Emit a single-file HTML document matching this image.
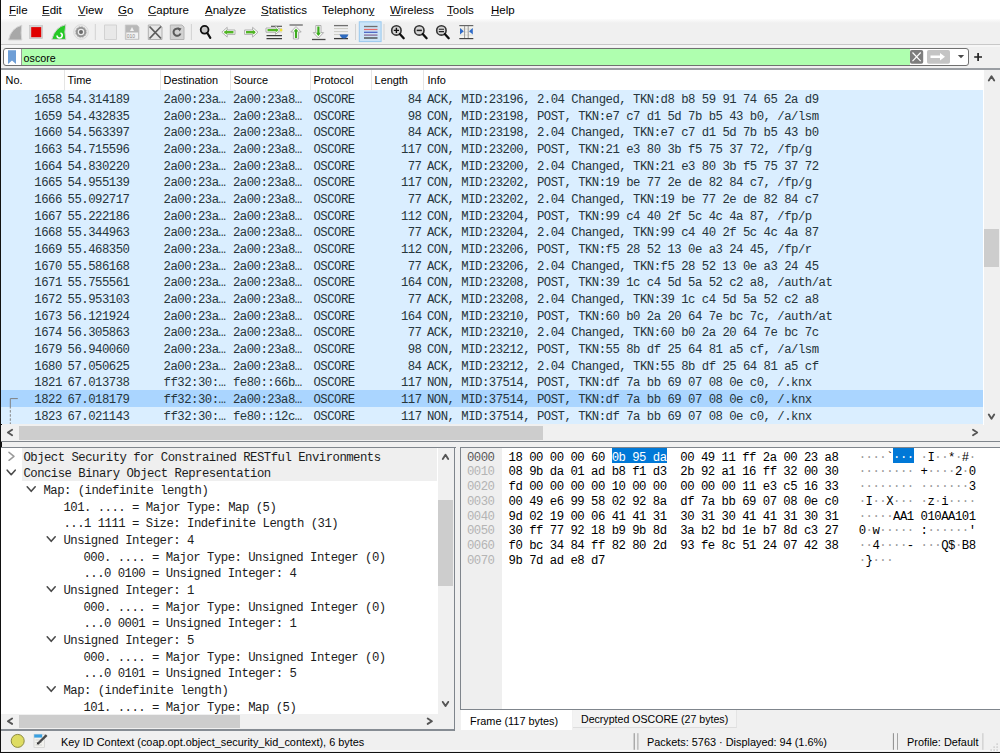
<!DOCTYPE html>
<html><head><meta charset="utf-8"><style>
*{margin:0;padding:0;box-sizing:border-box}
html,body{width:1000px;height:753px;overflow:hidden;background:#f0f0f0;position:relative}
body{font-family:"Liberation Sans",sans-serif;color:#000}
.a{position:absolute}
.m{font-family:"Liberation Mono",monospace;font-size:12.3px;letter-spacing:-0.510px;white-space:pre;line-height:16.6667px;color:#26353b}
.ui{font-family:"Liberation Sans",sans-serif;font-size:11px;white-space:pre;line-height:13px}
.menu span{position:absolute;top:3.8px;font-size:11.5px;color:#000;line-height:13px}
.menu u{text-decoration:underline;text-underline-offset:0.6px;text-decoration-thickness:1.2px;text-decoration-color:#505050}
svg{position:absolute;left:0;top:0;overflow:visible}
</style></head>
<body>
<div class="a" style="left:0;top:0;width:1.5px;height:753px;background:#111"></div>
<div class="a menu" style="left:1px;top:0;width:999px;height:19px;background:#fff">
<span style="left:8px"><u>F</u>ile</span>
<span style="left:41px"><u>E</u>dit</span>
<span style="left:77px"><u>V</u>iew</span>
<span style="left:117px"><u>G</u>o</span>
<span style="left:147px"><u>C</u>apture</span>
<span style="left:204px"><u>A</u>nalyze</span>
<span style="left:260px"><u>S</u>tatistics</span>
<span style="left:321px">Telephon<u>y</u></span>
<span style="left:389px"><u>W</u>ireless</span>
<span style="left:446px"><u>T</u>ools</span>
<span style="left:490px"><u>H</u>elp</span>
</div>
<div class="a" style="left:1px;top:19px;width:999px;height:25px;background:linear-gradient(#fcfcfc,#f0f0f0 4px)"></div>
<div class="a" style="left:1px;top:43.8px;width:999px;height:1px;background:#c8c8c8"></div>
<div class="a" style="left:1px;top:44.8px;width:999px;height:2.4px;background:#f6f6f6"></div>
<div class="a" style="left:1px;top:47.2px;width:999px;height:20.8px;background:#f0f0f0"></div>
<div class="a" style="left:3px;top:48px;width:966px;height:17.6px;border:1px solid #707070;border-radius:3px;background:#fff;overflow:hidden"><div class="a" style="left:17.5px;top:0;width:888.5px;height:16px;background:#afffaf"></div><div class="a" style="left:17.1px;top:0;width:0.9px;height:16px;background:#9a9a9a"></div><div class="a ui" style="left:19.6px;top:3.2px;font-size:10.7px;line-height:13px;color:#000">oscore</div></div>
<div class="a" style="left:1px;top:68px;width:999px;height:1.6px;background:#9a9ea3"></div>
<div class="a" style="left:1px;top:69.6px;width:983px;height:20.6px;background:#fff"></div>
<div class="a" style="left:63.9px;top:69.6px;width:1px;height:20.6px;background:#e5e5e5"></div>
<div class="a" style="left:159.9px;top:69.6px;width:1px;height:20.6px;background:#e5e5e5"></div>
<div class="a" style="left:229.5px;top:69.6px;width:1px;height:20.6px;background:#e5e5e5"></div>
<div class="a" style="left:310px;top:69.6px;width:1px;height:20.6px;background:#e5e5e5"></div>
<div class="a" style="left:370.7px;top:69.6px;width:1px;height:20.6px;background:#e5e5e5"></div>
<div class="a" style="left:423.2px;top:69.6px;width:1px;height:20.6px;background:#e5e5e5"></div>
<div class="a ui" style="left:5.6px;top:74.3px;font-size:10.9px;color:#000">No.</div>
<div class="a ui" style="left:67.6px;top:74.3px;font-size:10.9px;color:#000">Time</div>
<div class="a ui" style="left:163.6px;top:74.3px;font-size:10.9px;color:#000">Destination</div>
<div class="a ui" style="left:233.6px;top:74.3px;font-size:10.9px;color:#000">Source</div>
<div class="a ui" style="left:313.6px;top:74.3px;font-size:10.9px;color:#000">Protocol</div>
<div class="a ui" style="left:374.6px;top:74.3px;font-size:10.9px;color:#000">Length</div>
<div class="a ui" style="left:427.6px;top:74.3px;font-size:10.9px;color:#000">Info</div>
<div class="a" style="left:1px;top:90.2px;width:982px;height:333.33399999999995px;background:#daeeff"></div>
<div class="a" style="left:1px;top:390.20059999999995px;width:982px;height:16.6667px;background:#aad5ff"></div>
<div class="a m" style="left:0;top:92.00px;width:983px;height:16.6667px"><span class="a" style="right:921.2px;top:0">1658</span><span class="a" style="left:67.6px;top:0">54.314189</span><span class="a" style="left:163.6px;top:0">2a00:23a…</span><span class="a" style="left:233px;top:0">2a00:23a8…</span><span class="a" style="left:313.5px;top:0">OSCORE</span><span class="a" style="right:561.5px;top:0">84</span><span class="a" style="left:427px;top:0">ACK, MID:23196, 2.04 Changed, TKN:d8 b8 59 91 74 65 2a d9</span></div>
<div class="a m" style="left:0;top:108.67px;width:983px;height:16.6667px"><span class="a" style="right:921.2px;top:0">1659</span><span class="a" style="left:67.6px;top:0">54.432835</span><span class="a" style="left:163.6px;top:0">2a00:23a…</span><span class="a" style="left:233px;top:0">2a00:23a8…</span><span class="a" style="left:313.5px;top:0">OSCORE</span><span class="a" style="right:561.5px;top:0">98</span><span class="a" style="left:427px;top:0">CON, MID:23198, POST, TKN:e7 c7 d1 5d 7b b5 43 b0, /a/lsm</span></div>
<div class="a m" style="left:0;top:125.33px;width:983px;height:16.6667px"><span class="a" style="right:921.2px;top:0">1660</span><span class="a" style="left:67.6px;top:0">54.563397</span><span class="a" style="left:163.6px;top:0">2a00:23a…</span><span class="a" style="left:233px;top:0">2a00:23a8…</span><span class="a" style="left:313.5px;top:0">OSCORE</span><span class="a" style="right:561.5px;top:0">84</span><span class="a" style="left:427px;top:0">ACK, MID:23198, 2.04 Changed, TKN:e7 c7 d1 5d 7b b5 43 b0</span></div>
<div class="a m" style="left:0;top:142.00px;width:983px;height:16.6667px"><span class="a" style="right:921.2px;top:0">1663</span><span class="a" style="left:67.6px;top:0">54.715596</span><span class="a" style="left:163.6px;top:0">2a00:23a…</span><span class="a" style="left:233px;top:0">2a00:23a8…</span><span class="a" style="left:313.5px;top:0">OSCORE</span><span class="a" style="right:561.5px;top:0">117</span><span class="a" style="left:427px;top:0">CON, MID:23200, POST, TKN:21 e3 80 3b f5 75 37 72, /fp/g</span></div>
<div class="a m" style="left:0;top:158.67px;width:983px;height:16.6667px"><span class="a" style="right:921.2px;top:0">1664</span><span class="a" style="left:67.6px;top:0">54.830220</span><span class="a" style="left:163.6px;top:0">2a00:23a…</span><span class="a" style="left:233px;top:0">2a00:23a8…</span><span class="a" style="left:313.5px;top:0">OSCORE</span><span class="a" style="right:561.5px;top:0">77</span><span class="a" style="left:427px;top:0">ACK, MID:23200, 2.04 Changed, TKN:21 e3 80 3b f5 75 37 72</span></div>
<div class="a m" style="left:0;top:175.33px;width:983px;height:16.6667px"><span class="a" style="right:921.2px;top:0">1665</span><span class="a" style="left:67.6px;top:0">54.955139</span><span class="a" style="left:163.6px;top:0">2a00:23a…</span><span class="a" style="left:233px;top:0">2a00:23a8…</span><span class="a" style="left:313.5px;top:0">OSCORE</span><span class="a" style="right:561.5px;top:0">117</span><span class="a" style="left:427px;top:0">CON, MID:23202, POST, TKN:19 be 77 2e de 82 84 c7, /fp/g</span></div>
<div class="a m" style="left:0;top:192.00px;width:983px;height:16.6667px"><span class="a" style="right:921.2px;top:0">1666</span><span class="a" style="left:67.6px;top:0">55.092717</span><span class="a" style="left:163.6px;top:0">2a00:23a…</span><span class="a" style="left:233px;top:0">2a00:23a8…</span><span class="a" style="left:313.5px;top:0">OSCORE</span><span class="a" style="right:561.5px;top:0">77</span><span class="a" style="left:427px;top:0">ACK, MID:23202, 2.04 Changed, TKN:19 be 77 2e de 82 84 c7</span></div>
<div class="a m" style="left:0;top:208.67px;width:983px;height:16.6667px"><span class="a" style="right:921.2px;top:0">1667</span><span class="a" style="left:67.6px;top:0">55.222186</span><span class="a" style="left:163.6px;top:0">2a00:23a…</span><span class="a" style="left:233px;top:0">2a00:23a8…</span><span class="a" style="left:313.5px;top:0">OSCORE</span><span class="a" style="right:561.5px;top:0">112</span><span class="a" style="left:427px;top:0">CON, MID:23204, POST, TKN:99 c4 40 2f 5c 4c 4a 87, /fp/p</span></div>
<div class="a m" style="left:0;top:225.33px;width:983px;height:16.6667px"><span class="a" style="right:921.2px;top:0">1668</span><span class="a" style="left:67.6px;top:0">55.344963</span><span class="a" style="left:163.6px;top:0">2a00:23a…</span><span class="a" style="left:233px;top:0">2a00:23a8…</span><span class="a" style="left:313.5px;top:0">OSCORE</span><span class="a" style="right:561.5px;top:0">77</span><span class="a" style="left:427px;top:0">ACK, MID:23204, 2.04 Changed, TKN:99 c4 40 2f 5c 4c 4a 87</span></div>
<div class="a m" style="left:0;top:242.00px;width:983px;height:16.6667px"><span class="a" style="right:921.2px;top:0">1669</span><span class="a" style="left:67.6px;top:0">55.468350</span><span class="a" style="left:163.6px;top:0">2a00:23a…</span><span class="a" style="left:233px;top:0">2a00:23a8…</span><span class="a" style="left:313.5px;top:0">OSCORE</span><span class="a" style="right:561.5px;top:0">112</span><span class="a" style="left:427px;top:0">CON, MID:23206, POST, TKN:f5 28 52 13 0e a3 24 45, /fp/r</span></div>
<div class="a m" style="left:0;top:258.67px;width:983px;height:16.6667px"><span class="a" style="right:921.2px;top:0">1670</span><span class="a" style="left:67.6px;top:0">55.586168</span><span class="a" style="left:163.6px;top:0">2a00:23a…</span><span class="a" style="left:233px;top:0">2a00:23a8…</span><span class="a" style="left:313.5px;top:0">OSCORE</span><span class="a" style="right:561.5px;top:0">77</span><span class="a" style="left:427px;top:0">ACK, MID:23206, 2.04 Changed, TKN:f5 28 52 13 0e a3 24 45</span></div>
<div class="a m" style="left:0;top:275.33px;width:983px;height:16.6667px"><span class="a" style="right:921.2px;top:0">1671</span><span class="a" style="left:67.6px;top:0">55.755561</span><span class="a" style="left:163.6px;top:0">2a00:23a…</span><span class="a" style="left:233px;top:0">2a00:23a8…</span><span class="a" style="left:313.5px;top:0">OSCORE</span><span class="a" style="right:561.5px;top:0">164</span><span class="a" style="left:427px;top:0">CON, MID:23208, POST, TKN:39 1c c4 5d 5a 52 c2 a8, /auth/at</span></div>
<div class="a m" style="left:0;top:292.00px;width:983px;height:16.6667px"><span class="a" style="right:921.2px;top:0">1672</span><span class="a" style="left:67.6px;top:0">55.953103</span><span class="a" style="left:163.6px;top:0">2a00:23a…</span><span class="a" style="left:233px;top:0">2a00:23a8…</span><span class="a" style="left:313.5px;top:0">OSCORE</span><span class="a" style="right:561.5px;top:0">77</span><span class="a" style="left:427px;top:0">ACK, MID:23208, 2.04 Changed, TKN:39 1c c4 5d 5a 52 c2 a8</span></div>
<div class="a m" style="left:0;top:308.67px;width:983px;height:16.6667px"><span class="a" style="right:921.2px;top:0">1673</span><span class="a" style="left:67.6px;top:0">56.121924</span><span class="a" style="left:163.6px;top:0">2a00:23a…</span><span class="a" style="left:233px;top:0">2a00:23a8…</span><span class="a" style="left:313.5px;top:0">OSCORE</span><span class="a" style="right:561.5px;top:0">164</span><span class="a" style="left:427px;top:0">CON, MID:23210, POST, TKN:60 b0 2a 20 64 7e bc 7c, /auth/at</span></div>
<div class="a m" style="left:0;top:325.33px;width:983px;height:16.6667px"><span class="a" style="right:921.2px;top:0">1674</span><span class="a" style="left:67.6px;top:0">56.305863</span><span class="a" style="left:163.6px;top:0">2a00:23a…</span><span class="a" style="left:233px;top:0">2a00:23a8…</span><span class="a" style="left:313.5px;top:0">OSCORE</span><span class="a" style="right:561.5px;top:0">77</span><span class="a" style="left:427px;top:0">ACK, MID:23210, 2.04 Changed, TKN:60 b0 2a 20 64 7e bc 7c</span></div>
<div class="a m" style="left:0;top:342.00px;width:983px;height:16.6667px"><span class="a" style="right:921.2px;top:0">1679</span><span class="a" style="left:67.6px;top:0">56.940060</span><span class="a" style="left:163.6px;top:0">2a00:23a…</span><span class="a" style="left:233px;top:0">2a00:23a8…</span><span class="a" style="left:313.5px;top:0">OSCORE</span><span class="a" style="right:561.5px;top:0">98</span><span class="a" style="left:427px;top:0">CON, MID:23212, POST, TKN:55 8b df 25 64 81 a5 cf, /a/lsm</span></div>
<div class="a m" style="left:0;top:358.67px;width:983px;height:16.6667px"><span class="a" style="right:921.2px;top:0">1680</span><span class="a" style="left:67.6px;top:0">57.050625</span><span class="a" style="left:163.6px;top:0">2a00:23a…</span><span class="a" style="left:233px;top:0">2a00:23a8…</span><span class="a" style="left:313.5px;top:0">OSCORE</span><span class="a" style="right:561.5px;top:0">84</span><span class="a" style="left:427px;top:0">ACK, MID:23212, 2.04 Changed, TKN:55 8b df 25 64 81 a5 cf</span></div>
<div class="a m" style="left:0;top:375.33px;width:983px;height:16.6667px"><span class="a" style="right:921.2px;top:0">1821</span><span class="a" style="left:67.6px;top:0">67.013738</span><span class="a" style="left:163.6px;top:0">ff32:30:…</span><span class="a" style="left:233px;top:0">fe80::66b…</span><span class="a" style="left:313.5px;top:0">OSCORE</span><span class="a" style="right:561.5px;top:0">117</span><span class="a" style="left:427px;top:0">NON, MID:37514, POST, TKN:df 7a bb 69 07 08 0e c0, /.knx</span></div>
<div class="a m" style="left:0;top:392.00px;width:983px;height:16.6667px"><span class="a" style="right:921.2px;top:0">1822</span><span class="a" style="left:67.6px;top:0">67.018179</span><span class="a" style="left:163.6px;top:0">ff32:30:…</span><span class="a" style="left:233px;top:0">2a00:23a8…</span><span class="a" style="left:313.5px;top:0">OSCORE</span><span class="a" style="right:561.5px;top:0">117</span><span class="a" style="left:427px;top:0">NON, MID:37514, POST, TKN:df 7a bb 69 07 08 0e c0, /.knx</span></div>
<div class="a m" style="left:0;top:408.67px;width:983px;height:16.6667px"><span class="a" style="right:921.2px;top:0">1823</span><span class="a" style="left:67.6px;top:0">67.021143</span><span class="a" style="left:163.6px;top:0">ff32:30:…</span><span class="a" style="left:233px;top:0">fe80::12c…</span><span class="a" style="left:313.5px;top:0">OSCORE</span><span class="a" style="right:561.5px;top:0">117</span><span class="a" style="left:427px;top:0">NON, MID:37514, POST, TKN:df 7a bb 69 07 08 0e c0, /.knx</span></div>
<div class="a" style="left:983px;top:69.6px;width:1.3px;height:355px;background:#fff"></div>
<div class="a" style="left:984.3px;top:69.6px;width:15.7px;height:355px;background:#f0f0f0"></div>
<div class="a" style="left:984.2px;top:228.6px;width:14.6px;height:38.3px;background:#cdcdcd"></div>
<div class="a" style="left:1px;top:424.5px;width:999px;height:16.5px;background:#f0f0f0"></div>
<div class="a" style="left:18.5px;top:426px;width:524px;height:13.5px;background:#cdcdcd"></div>
<div class="a" style="left:1px;top:440.6px;width:999px;height:1.3px;background:#7f858c"></div>
<div class="a" style="left:1px;top:446.8px;width:454.5px;height:1.3px;background:#7f858c"></div>
<div class="a" style="left:460px;top:446.8px;width:540px;height:1.3px;background:#7f858c"></div>
<div class="a" style="left:1px;top:448px;width:453.5px;height:281px;background:#fff"></div>
<div class="a" style="left:453.9px;top:446.8px;width:1.3px;height:283px;background:#7f858c"></div>
<div class="a" style="left:1px;top:729px;width:454.2px;height:1.6px;background:#868c93"></div>
<div class="a" style="left:22px;top:448.1px;width:415.2px;height:32.8px;background:#efefef"></div>
<div class="a m" style="left:23.4px;top:449.80px;color:#1c1c1c">Object Security for Constrained RESTful Environments</div>
<div class="a m" style="left:23.4px;top:466.47px;color:#1c1c1c">Concise Binary Object Representation</div>
<div class="a m" style="left:43.4px;top:483.13px;color:#1c1c1c">Map: (indefinite length)</div>
<div class="a m" style="left:63.4px;top:499.80px;color:#1c1c1c">101. .... = Major Type: Map (5)</div>
<div class="a m" style="left:63.4px;top:516.47px;color:#1c1c1c">...1 1111 = Size: Indefinite Length (31)</div>
<div class="a m" style="left:63.4px;top:533.13px;color:#1c1c1c">Unsigned Integer: 4</div>
<div class="a m" style="left:83.4px;top:549.80px;color:#1c1c1c">000. .... = Major Type: Unsigned Integer (0)</div>
<div class="a m" style="left:83.4px;top:566.47px;color:#1c1c1c">...0 0100 = Unsigned Integer: 4</div>
<div class="a m" style="left:63.4px;top:583.13px;color:#1c1c1c">Unsigned Integer: 1</div>
<div class="a m" style="left:83.4px;top:599.80px;color:#1c1c1c">000. .... = Major Type: Unsigned Integer (0)</div>
<div class="a m" style="left:83.4px;top:616.47px;color:#1c1c1c">...0 0001 = Unsigned Integer: 1</div>
<div class="a m" style="left:63.4px;top:633.13px;color:#1c1c1c">Unsigned Integer: 5</div>
<div class="a m" style="left:83.4px;top:649.80px;color:#1c1c1c">000. .... = Major Type: Unsigned Integer (0)</div>
<div class="a m" style="left:83.4px;top:666.47px;color:#1c1c1c">...0 0101 = Unsigned Integer: 5</div>
<div class="a m" style="left:63.4px;top:683.13px;color:#1c1c1c">Map: (indefinite length)</div>
<div class="a m" style="left:83.4px;top:699.80px;color:#1c1c1c">101. .... = Major Type: Map (5)</div>
<div class="a" style="left:438.2px;top:448px;width:16px;height:265.7px;background:#f0f0f0"></div>
<div class="a" style="left:438.2px;top:500px;width:14.6px;height:86px;background:#cdcdcd"></div>
<div class="a" style="left:1px;top:713.7px;width:453.5px;height:15.3px;background:#f0f0f0"></div>
<div class="a" style="left:18.5px;top:715px;width:221.5px;height:12.7px;background:#cdcdcd"></div>
<div class="a" style="left:453.9px;top:446.8px;width:1.3px;height:283.8px;background:#7f858c"></div>
<div class="a" style="left:460px;top:446.8px;width:540px;height:263.4px;background:#fff;border-left:1.3px solid #7f858c;border-top:1.3px solid #7f858c;border-bottom:1.5px solid #7f858c"></div>
<div class="a" style="left:461.3px;top:448.1px;width:40.7px;height:260.6px;background:#efefef"></div>
<div class="a" style="left:612px;top:448px;width:55px;height:14.7px;background:#0078d7"></div>
<div class="a" style="left:893px;top:448px;width:21px;height:14.7px;background:#0078d7"></div>
<div class="a m" style="left:467px;top:450.80px;line-height:14.69px;color:#5a5a5a">0000</div>
<div class="a m" style="left:508.6px;top:450.80px;line-height:14.69px;color:#000">18 00 00 00 60 <span style="color:#fff">0b 95 da</span>  00 49 11 ff 2a 00 23 a8</div>
<div class="a m" style="left:858.7px;top:450.80px;line-height:14.69px;color:#000"><i style="font-style:normal;color:#9a9a9a">·</i><i style="font-style:normal;color:#9a9a9a">·</i><i style="font-style:normal;color:#9a9a9a">·</i><i style="font-style:normal;color:#9a9a9a">·</i>`<span style="color:#fff">···</span> <i style="font-style:normal;color:#9a9a9a">·</i>I<i style="font-style:normal;color:#9a9a9a">·</i><i style="font-style:normal;color:#9a9a9a">·</i>*<i style="font-style:normal;color:#9a9a9a">·</i>#<i style="font-style:normal;color:#9a9a9a">·</i></div>
<div class="a m" style="left:467px;top:465.49px;line-height:14.69px;color:#b4b4b4">0010</div>
<div class="a m" style="left:508.6px;top:465.49px;line-height:14.69px;color:#000">08 9b da 01 ad b8 f1 d3  2b 92 a1 16 ff 32 00 30</div>
<div class="a m" style="left:858.7px;top:465.49px;line-height:14.69px;color:#000"><i style="font-style:normal;color:#9a9a9a">·</i><i style="font-style:normal;color:#9a9a9a">·</i><i style="font-style:normal;color:#9a9a9a">·</i><i style="font-style:normal;color:#9a9a9a">·</i><i style="font-style:normal;color:#9a9a9a">·</i><i style="font-style:normal;color:#9a9a9a">·</i><i style="font-style:normal;color:#9a9a9a">·</i><i style="font-style:normal;color:#9a9a9a">·</i> +<i style="font-style:normal;color:#9a9a9a">·</i><i style="font-style:normal;color:#9a9a9a">·</i><i style="font-style:normal;color:#9a9a9a">·</i><i style="font-style:normal;color:#9a9a9a">·</i>2<i style="font-style:normal;color:#9a9a9a">·</i>0</div>
<div class="a m" style="left:467px;top:480.18px;line-height:14.69px;color:#b4b4b4">0020</div>
<div class="a m" style="left:508.6px;top:480.18px;line-height:14.69px;color:#000">fd 00 00 00 00 10 00 00  00 00 00 11 e3 c5 16 33</div>
<div class="a m" style="left:858.7px;top:480.18px;line-height:14.69px;color:#000"><i style="font-style:normal;color:#9a9a9a">·</i><i style="font-style:normal;color:#9a9a9a">·</i><i style="font-style:normal;color:#9a9a9a">·</i><i style="font-style:normal;color:#9a9a9a">·</i><i style="font-style:normal;color:#9a9a9a">·</i><i style="font-style:normal;color:#9a9a9a">·</i><i style="font-style:normal;color:#9a9a9a">·</i><i style="font-style:normal;color:#9a9a9a">·</i> <i style="font-style:normal;color:#9a9a9a">·</i><i style="font-style:normal;color:#9a9a9a">·</i><i style="font-style:normal;color:#9a9a9a">·</i><i style="font-style:normal;color:#9a9a9a">·</i><i style="font-style:normal;color:#9a9a9a">·</i><i style="font-style:normal;color:#9a9a9a">·</i><i style="font-style:normal;color:#9a9a9a">·</i>3</div>
<div class="a m" style="left:467px;top:494.87px;line-height:14.69px;color:#b4b4b4">0030</div>
<div class="a m" style="left:508.6px;top:494.87px;line-height:14.69px;color:#000">00 49 e6 99 58 02 92 8a  df 7a bb 69 07 08 0e c0</div>
<div class="a m" style="left:858.7px;top:494.87px;line-height:14.69px;color:#000"><i style="font-style:normal;color:#9a9a9a">·</i>I<i style="font-style:normal;color:#9a9a9a">·</i><i style="font-style:normal;color:#9a9a9a">·</i>X<i style="font-style:normal;color:#9a9a9a">·</i><i style="font-style:normal;color:#9a9a9a">·</i><i style="font-style:normal;color:#9a9a9a">·</i> <i style="font-style:normal;color:#9a9a9a">·</i>z<i style="font-style:normal;color:#9a9a9a">·</i>i<i style="font-style:normal;color:#9a9a9a">·</i><i style="font-style:normal;color:#9a9a9a">·</i><i style="font-style:normal;color:#9a9a9a">·</i><i style="font-style:normal;color:#9a9a9a">·</i></div>
<div class="a m" style="left:467px;top:509.56px;line-height:14.69px;color:#b4b4b4">0040</div>
<div class="a m" style="left:508.6px;top:509.56px;line-height:14.69px;color:#000">9d 02 19 00 06 41 41 31  30 31 30 41 41 31 30 31</div>
<div class="a m" style="left:858.7px;top:509.56px;line-height:14.69px;color:#000"><i style="font-style:normal;color:#9a9a9a">·</i><i style="font-style:normal;color:#9a9a9a">·</i><i style="font-style:normal;color:#9a9a9a">·</i><i style="font-style:normal;color:#9a9a9a">·</i><i style="font-style:normal;color:#9a9a9a">·</i>AA1 010AA101</div>
<div class="a m" style="left:467px;top:524.25px;line-height:14.69px;color:#b4b4b4">0050</div>
<div class="a m" style="left:508.6px;top:524.25px;line-height:14.69px;color:#000">30 ff 77 92 18 b9 9b 8d  3a b2 bd 1e b7 8d c3 27</div>
<div class="a m" style="left:858.7px;top:524.25px;line-height:14.69px;color:#000">0<i style="font-style:normal;color:#9a9a9a">·</i>w<i style="font-style:normal;color:#9a9a9a">·</i><i style="font-style:normal;color:#9a9a9a">·</i><i style="font-style:normal;color:#9a9a9a">·</i><i style="font-style:normal;color:#9a9a9a">·</i><i style="font-style:normal;color:#9a9a9a">·</i> :<i style="font-style:normal;color:#9a9a9a">·</i><i style="font-style:normal;color:#9a9a9a">·</i><i style="font-style:normal;color:#9a9a9a">·</i><i style="font-style:normal;color:#9a9a9a">·</i><i style="font-style:normal;color:#9a9a9a">·</i><i style="font-style:normal;color:#9a9a9a">·</i>&#x27;</div>
<div class="a m" style="left:467px;top:538.94px;line-height:14.69px;color:#b4b4b4">0060</div>
<div class="a m" style="left:508.6px;top:538.94px;line-height:14.69px;color:#000">f0 bc 34 84 ff 82 80 2d  93 fe 8c 51 24 07 42 38</div>
<div class="a m" style="left:858.7px;top:538.94px;line-height:14.69px;color:#000"><i style="font-style:normal;color:#9a9a9a">·</i><i style="font-style:normal;color:#9a9a9a">·</i>4<i style="font-style:normal;color:#9a9a9a">·</i><i style="font-style:normal;color:#9a9a9a">·</i><i style="font-style:normal;color:#9a9a9a">·</i><i style="font-style:normal;color:#9a9a9a">·</i>- <i style="font-style:normal;color:#9a9a9a">·</i><i style="font-style:normal;color:#9a9a9a">·</i><i style="font-style:normal;color:#9a9a9a">·</i>Q$<i style="font-style:normal;color:#9a9a9a">·</i>B8</div>
<div class="a m" style="left:467px;top:553.63px;line-height:14.69px;color:#b4b4b4">0070</div>
<div class="a m" style="left:508.6px;top:553.63px;line-height:14.69px;color:#000">9b 7d ad e8 d7</div>
<div class="a m" style="left:858.7px;top:553.63px;line-height:14.69px;color:#000"><i style="font-style:normal;color:#9a9a9a">·</i>}<i style="font-style:normal;color:#9a9a9a">·</i><i style="font-style:normal;color:#9a9a9a">·</i><i style="font-style:normal;color:#9a9a9a">·</i></div>
<div class="a" style="left:461px;top:710px;width:111px;height:20px;background:#fff"></div>
<div class="a ui" style="left:470px;top:715px;font-size:10.9px;color:#000">Frame (117 bytes)</div>
<div class="a" style="left:572.6px;top:710px;width:164.4px;height:18.4px;background:#f3f3f3;border-bottom:1px solid #dedede;border-right:1px solid #e4e4e4"></div>
<div class="a ui" style="left:581px;top:713px;font-size:10.6px;color:#000">Decrypted OSCORE (27 bytes)</div>
<div class="a" style="left:1px;top:730.6px;width:999px;height:21.4px;background:#f0f0f0"></div>
<div class="a" style="left:1px;top:750.3px;width:999px;height:1.2px;background:#fafafa"></div>
<div class="a" style="left:0;top:751.5px;width:1000px;height:1.5px;background:#111"></div>
<div class="a ui" style="left:61px;top:736px;font-size:10.9px;color:#000">Key ID Context (coap.opt.object_security_kid_context), 6 bytes</div>
<div class="a ui" style="left:647px;top:736px;font-size:10.9px;color:#000">Packets: 5763 · Displayed: 94 (1.6%)</div>
<div class="a ui" style="left:907px;top:736px;font-size:10.9px;color:#000">Profile: Default</div>
<svg width="1000" height="753" viewBox="0 0 1000 753"><path d="M8.5,40 Q11,28 21.8,25.2 Q20.5,33 21.8,40 Z" fill="#a8a8a8" stroke="#d6d6d6" stroke-width="1"/><rect x="29.6" y="25.6" width="13" height="13" fill="#d4d4d4" stroke="#c0c0c0" stroke-width="0.6"/><rect x="31.2" y="27.1" width="10" height="10.1" fill="#e00000"/><path d="M51.8,39.4 Q55,27 65.8,24.6 Q64,32 65.8,39.4 Z" fill="#26c926" stroke="#cfcfcf" stroke-width="1"/><path d="M57,35.5 A2.6,2.6 0 1 0 60.5,33" fill="none" stroke="#fff" stroke-width="1.6"/><circle cx="81" cy="32" r="7.3" fill="#ececec" stroke="#dadada" stroke-width="1"/><circle cx="81" cy="32" r="4.3" fill="none" stroke="#959595" stroke-width="2.1"/><circle cx="81" cy="32" r="5.6" fill="none" stroke="#b4b4b4" stroke-width="0.8" stroke-dasharray="1.5 1.4"/><circle cx="81" cy="32" r="2" fill="#6a6a6a"/><line x1="95.3" y1="24" x2="95.3" y2="40" stroke="#d2d2d2" stroke-width="1"/><line x1="191.4" y1="24" x2="191.4" y2="40" stroke="#d2d2d2" stroke-width="1"/><line x1="355.5" y1="24" x2="355.5" y2="40" stroke="#d2d2d2" stroke-width="1"/><line x1="384" y1="24" x2="384" y2="40" stroke="#d2d2d2" stroke-width="1"/><path d="M104.5,25 H116.5 V39.5 H104.5 Z" fill="#e8e8e8" stroke="#d2d2d2" stroke-width="1"/><path d="M125.3,25 H137 L139,27 V39.5 H125.3 Z" fill="#b8b8b8" stroke="#c8c8c8" stroke-width="0.8"/><rect x="126.3" y="32.5" width="11.8" height="6.3" fill="#f2f2f2"/><text x="126.8" y="37.8" font-family="Liberation Sans" font-size="5" fill="#888">010</text><path d="M130,31 L132,27 L134,31 Z" fill="#f2f2f2"/><path d="M148.3,25 H160 L162,27 V39.5 H148.3 Z" fill="#e6e6e6" stroke="#b0b0b0" stroke-width="1"/><path d="M149.5,26.5 L161,38.5 M161,26.5 L149.5,38.5" stroke="#5c5c5c" stroke-width="1.8"/><path d="M170.3,25 H182 L184,27 V39.5 H170.3 Z" fill="#d2d2d2" stroke="#b4b4b4" stroke-width="1"/><path d="M180.5,33.5 A3.6,3.6 0 1 1 179.5,29.5" fill="none" stroke="#5a5a5a" stroke-width="2"/><path d="M178,27.5 L181.5,28.5 L179.5,31.5 Z" fill="#5a5a5a"/><circle cx="204.6" cy="29.8" r="3.9" fill="#c8c8c8" stroke="#111" stroke-width="1.8"/><line x1="207.3" y1="33" x2="210.3" y2="37.8" stroke="#111" stroke-width="2.2" stroke-linecap="round"/><path d="M221.8,32.2 L227.2,27.3 V30 H235 V34.4 H227.2 V37.1 Z" fill="#fafafa" stroke="#a8a8a8" stroke-width="0.9"/><path d="M224.5,32.2 H233.5" stroke="#52b526" stroke-width="2.4"/><path d="M224,32.2 L227,29.8 V34.6 Z" fill="#52b526"/><path d="M258,32.2 L252.6,27.3 V30 H244.6 V34.4 H252.6 V37.1 Z" fill="#fafafa" stroke="#a8a8a8" stroke-width="0.9"/><path d="M246,32.2 H255" stroke="#52b526" stroke-width="2.4"/><path d="M255.8,32.2 L252.8,29.8 V34.6 Z" fill="#52b526"/><path d="M271,26.3 H282" stroke="#5a5a5a" stroke-width="1.2"/><path d="M266.5,35.6 H282 M266.5,38.6 H282" stroke="#3c3c3c" stroke-width="1.2"/><path d="M266.5,28.5 H282 M266.5,32 H282" stroke="#c4c4c4" stroke-width="0.8"/><path d="M280.5,30 L275.5,25.8 V28 H266 V32.2 H275.5 V34.4 Z" fill="#fafafa" stroke="#a8a8a8" stroke-width="0.9"/><path d="M267.5,30.1 H277.5" stroke="#52b526" stroke-width="2.2"/><path d="M278.8,30.1 L275.8,27.9 V32.3 Z" fill="#52b526"/><rect x="280" y="28.8" width="2.3" height="2.5" fill="#f0e030"/><path d="M289.5,25 H302.8" stroke="#6a6a6a" stroke-width="1.3"/><path d="M296,26.6 L301.2,32 H298.6 V39 H293.4 V32 H290.8 Z" fill="#fafafa" stroke="#a8a8a8" stroke-width="0.9"/><path d="M296,30 V38" stroke="#3cac1e" stroke-width="2.2"/><path d="M296,28.5 L298.4,31.6 H293.6 Z" fill="#3cac1e"/><path d="M312,39.5 H325.5" stroke="#4a4a4a" stroke-width="1.3"/><path d="M318.4,38 L323.6,32.6 H321 V25.5 H315.8 V32.6 H313.2 Z" fill="#fafafa" stroke="#a8a8a8" stroke-width="0.9"/><path d="M318.4,26.5 V34.5" stroke="#3cac1e" stroke-width="2.2"/><path d="M318.4,36 L320.8,32.8 H316 Z" fill="#3cac1e"/><path d="M334,25.6 H348" stroke="#707070" stroke-width="1.3"/><path d="M334,28.6 H348 M334,31.6 H348 M334,34.6 H348" stroke="#cacac4" stroke-width="1"/><path d="M334,38.6 H348" stroke="#3a3a3a" stroke-width="1.3"/><path d="M339.5,34.6 H348.5 Q347,38.5 344,38.5 Q341,38.5 339.5,34.6 Z" fill="#2f6bc0"/><rect x="359.3" y="21.8" width="21.8" height="19.8" fill="#cce4f7" stroke="#99c9ef" stroke-width="1"/><path d="M364,26.5 H377.5" stroke="#6e6e6e" stroke-width="1.3"/><path d="M364,29.5 H377.5" stroke="#e86a6a" stroke-width="1.3"/><path d="M364,32.3 H377.5" stroke="#4c64c4" stroke-width="1.3"/><path d="M364,35.1 H377.5" stroke="#8a6c98" stroke-width="1.3"/><path d="M364,38 H377.5" stroke="#3e3e3e" stroke-width="1.3"/><circle cx="396.4" cy="30.4" r="4.7" fill="#d6d6d6" stroke="#333" stroke-width="1.6"/><line x1="399.79999999999995" y1="34" x2="403.7" y2="38.2" stroke="#111" stroke-width="2.3" stroke-linecap="round"/><path d="M393.79999999999995,30.4 H399.0 M396.4,27.8 V33" stroke="#111" stroke-width="1.4"/><circle cx="419.3" cy="30.4" r="4.7" fill="#d6d6d6" stroke="#333" stroke-width="1.6"/><line x1="422.7" y1="34" x2="426.6" y2="38.2" stroke="#111" stroke-width="2.3" stroke-linecap="round"/><path d="M416.7,30.4 H421.90000000000003" stroke="#222" stroke-width="1.5"/><circle cx="441.4" cy="30.4" r="4.7" fill="#d6d6d6" stroke="#333" stroke-width="1.6"/><line x1="444.79999999999995" y1="34" x2="448.7" y2="38.2" stroke="#111" stroke-width="2.3" stroke-linecap="round"/><path d="M438.79999999999995,29.3 H444.0 M438.79999999999995,31.6 H444.0" stroke="#222" stroke-width="1.1"/><rect x="459.5" y="26" width="13.5" height="12" fill="#f4f4f0"/><path d="M459.3,25.6 H473.3" stroke="#666" stroke-width="1.2"/><path d="M459.3,38.6 H473.3" stroke="#444" stroke-width="1.2"/><path d="M459.5,29 H473 M459.5,32 H473 M459.5,35 H473" stroke="#d8d8d0" stroke-width="0.8"/><path d="M464.6,26 V38 M468.2,26 V38" stroke="#999" stroke-width="1"/><path d="M460,28 L463.8,31.3 L460,34.6 Z M472.8,28 L469,31.3 L472.8,34.6 Z" fill="#2f6bc8"/><path d="M8,50.3 H16 V64 L12,60.5 L8,64 Z" fill="#6e9ed6"/><rect x="910" y="50" width="13.2" height="13.7" rx="1.8" fill="#7e7e7e"/><path d="M912.5,52.5 L920.7,61.2 M920.7,52.5 L912.5,61.2" stroke="#fff" stroke-width="1.2"/><rect x="927" y="50" width="23" height="13.7" rx="1.8" fill="#c4c4c4"/><path d="M930.5,55.5 H940 V53 L945,56.8 L940,60.6 V58.1 H930.5 Z" fill="#fff"/><path d="M957.8,55 H964.2 L961,58.3 Z" fill="#4a4a4a"/><path d="M974.2,57 H982 M978.1,53.1 V61" stroke="#222" stroke-width="1.7"/><polyline points="988.8,80.39999999999999 991.5,76.2 994.2,80.39999999999999" fill="none" stroke="#555" stroke-width="1.9" stroke-linejoin="round" stroke-linecap="round"/><polyline points="988.8,414.5 991.5,418.70000000000005 994.2,414.5" fill="none" stroke="#555" stroke-width="1.9" stroke-linejoin="round" stroke-linecap="round"/><polyline points="12.1,429.8 7.9,432.5 12.1,435.2" fill="none" stroke="#555" stroke-width="1.9" stroke-linejoin="round" stroke-linecap="round"/><polyline points="973.0,429.8 977.2,432.5 973.0,435.2" fill="none" stroke="#555" stroke-width="1.9" stroke-linejoin="round" stroke-linecap="round"/><path d="M17.8,398.6 H10.3 V406" fill="none" stroke="#808080" stroke-width="1"/><path d="M10.3,406 V424" fill="none" stroke="#808080" stroke-width="1" stroke-dasharray="2.5 1.6"/><polyline points="9,452.3 14,456.3 9,460.3" fill="none" stroke="#9a9a9a" stroke-width="1.5" stroke-linejoin="round" stroke-linecap="round"/><polyline points="7.2,470.1667 11.2,474.6667 15.2,470.1667" fill="none" stroke="#4a4a4a" stroke-width="1.6" stroke-linejoin="round" stroke-linecap="round"/><polyline points="27.2,486.8334 31.200000000000003,491.3334 35.2,486.8334" fill="none" stroke="#4a4a4a" stroke-width="1.6" stroke-linejoin="round" stroke-linecap="round"/><polyline points="47.2,536.8335 51.2,541.3335 55.2,536.8335" fill="none" stroke="#4a4a4a" stroke-width="1.6" stroke-linejoin="round" stroke-linecap="round"/><polyline points="47.2,586.8336 51.2,591.3336 55.2,586.8336" fill="none" stroke="#4a4a4a" stroke-width="1.6" stroke-linejoin="round" stroke-linecap="round"/><polyline points="47.2,636.8337 51.2,641.3337 55.2,636.8337" fill="none" stroke="#4a4a4a" stroke-width="1.6" stroke-linejoin="round" stroke-linecap="round"/><polyline points="47.2,686.8338 51.2,691.3338 55.2,686.8338" fill="none" stroke="#4a4a4a" stroke-width="1.6" stroke-linejoin="round" stroke-linecap="round"/><polyline points="442.8,459.0 445.5,454.79999999999995 448.2,459.0" fill="none" stroke="#555" stroke-width="1.9" stroke-linejoin="round" stroke-linecap="round"/><polyline points="442.8,701.9 445.5,706.1 448.2,701.9" fill="none" stroke="#555" stroke-width="1.9" stroke-linejoin="round" stroke-linecap="round"/><polyline points="12.1,718.5 7.9,721.2 12.1,723.9000000000001" fill="none" stroke="#555" stroke-width="1.9" stroke-linejoin="round" stroke-linecap="round"/><polyline points="427.7,718.5 431.90000000000003,721.2 427.7,723.9000000000001" fill="none" stroke="#555" stroke-width="1.9" stroke-linejoin="round" stroke-linecap="round"/><circle cx="17.7" cy="740.9" r="6.5" fill="#dedc62" stroke="#8c8a40" stroke-width="1"/><rect x="34" y="734.2" width="10.6" height="13.2" fill="#f2f2ee" stroke="#c8c8c8" stroke-width="0.6"/><rect x="34.2" y="734.4" width="8" height="3.2" fill="#3aa0e0"/><path d="M35.5,740 H42 M35.5,742.5 H42 M35.5,745 H42" stroke="#c0c0c0" stroke-width="0.6"/><path d="M46.6,735.2 L37.6,744" stroke="#4a4a4a" stroke-width="2.4"/><path d="M38.6,743 L36.8,745 L37.4,742.6 Z" fill="#222"/><line x1="634.2" y1="733.2" x2="634.2" y2="749.8" stroke="#8a8a8a" stroke-width="1"/><line x1="637.9" y1="733.2" x2="637.9" y2="749.8" stroke="#a4a4a4" stroke-width="1"/><line x1="893.4" y1="733.2" x2="893.4" y2="749.8" stroke="#8a8a8a" stroke-width="1"/><line x1="897.5" y1="733.2" x2="897.5" y2="749.8" stroke="#a4a4a4" stroke-width="1"/><line x1="982.9" y1="733.2" x2="982.9" y2="749.8" stroke="#c4c4c4" stroke-width="1"/><rect x="996.5" y="743.5" width="1.2" height="1.2" fill="#b8b8b8"/><rect x="993.5" y="746.5" width="1.2" height="1.2" fill="#b8b8b8"/><rect x="996.5" y="746.5" width="1.2" height="1.2" fill="#b8b8b8"/><rect x="990.5" y="749.5" width="1.2" height="1.2" fill="#b8b8b8"/><rect x="993.5" y="749.5" width="1.2" height="1.2" fill="#b8b8b8"/><rect x="996.5" y="749.5" width="1.2" height="1.2" fill="#b8b8b8"/></svg>
</body></html>
